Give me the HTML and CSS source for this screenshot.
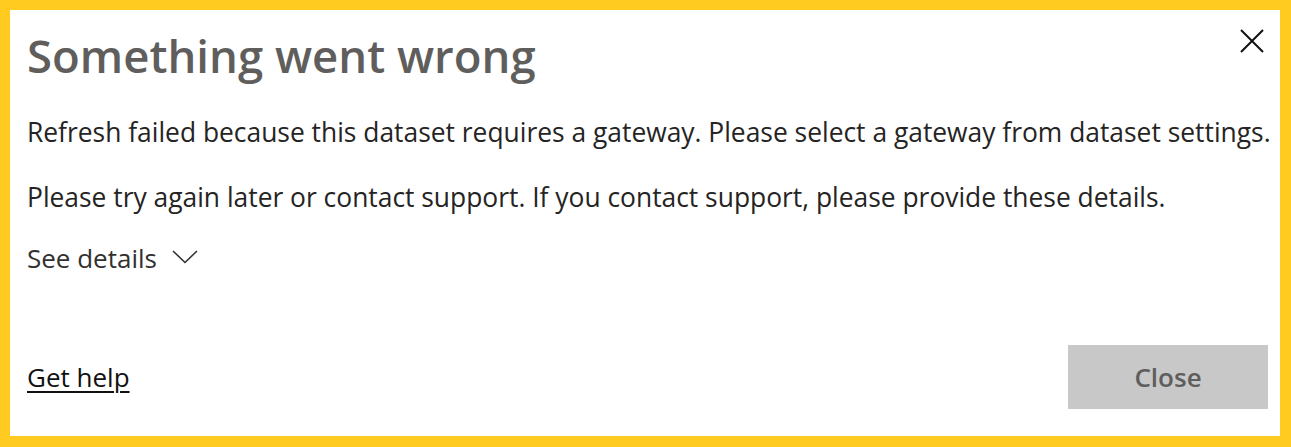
FILE: index.html
```html
<!DOCTYPE html>
<html>
<head>
<meta charset="utf-8">
<link rel="stylesheet" href="styles.css">
</head>
<body>
<div class="dialog">
  <div class="header">
    <h1 class="title">Something went wrong</h1>
    <button class="x-btn" aria-label="Close">
      <svg width="24" height="24" viewBox="0 0 24 24"><path d="M1 1 L23 23 M23 1 L1 23" stroke="#111" stroke-width="2" fill="none"/></svg>
    </button>
  </div>
  <p class="msg first">Refresh failed because this dataset requires a gateway. Please select a gateway from dataset settings.</p>
  <p class="msg second">Please try again later or contact support. If you contact support, please provide these details.</p>
  <div class="details">See details
    <svg class="chev" width="26" height="14" viewBox="0 0 26 14"><path d="M1 1 L13 12.5 L25 1" stroke="#333" stroke-width="1.6" fill="none"/></svg>
  </div>
  <div class="footer">
    <a class="help" href="#">Get help</a>
    <button class="close-btn">Close</button>
  </div>
</div>
</body>
</html>
```
FILE: styles.css
```css
html, body { margin: 0; padding: 0; }
body {
  width: 1291px;
  height: 447px;
  background: #FFCB20;
  padding: 10px 11px 11px 10px;
  box-sizing: border-box;
  font-family: "Open Sans", "Noto Sans", sans-serif;
}
.dialog {
  background: #fff;
  width: 100%;
  height: 100%;
  box-sizing: border-box;
  padding: 0 12px 0 17px;
  display: flex;
  flex-direction: column;
}
.header {
  display: flex;
  justify-content: space-between;
  align-items: flex-start;
}
.title {
  margin: 15px 0 0 0;
  font-size: 45.5px;
  font-weight: 600;
  color: #605E5C;
  line-height: 60px;
}
.x-btn {
  background: none;
  border: 0;
  padding: 0;
  margin: 19px 4px 0 0;
  width: 24px;
  height: 24px;
}
.msg {
  margin: 0;
  font-size: 26.4px;
  color: #252423;
  line-height: 36px;
  white-space: nowrap;
}
.first { margin-top: 29px; }
.second { margin-top: 29px; }
.details {
  margin-top: 25px;
  font-size: 26px;
  color: #323130;
  line-height: 36px;
  display: flex;
  align-items: center;
  gap: 15px;
}
.chev { margin-top: -2px; }
.footer {
  margin-top: auto;
  margin-bottom: 27px;
  display: flex;
  justify-content: space-between;
  align-items: center;
}
.help {
  font-size: 26px;
  line-height: 36px;
  color: #111;
  text-decoration: underline;
  text-underline-offset: 4px;
  text-decoration-thickness: 2px;
}
.close-btn {
  width: 200px;
  height: 64px;
  background: #C8C8C8;
  border: 0;
  font-family: inherit;
  font-size: 26px;
  font-weight: 600;
  color: #5E5E5E;
}
```
